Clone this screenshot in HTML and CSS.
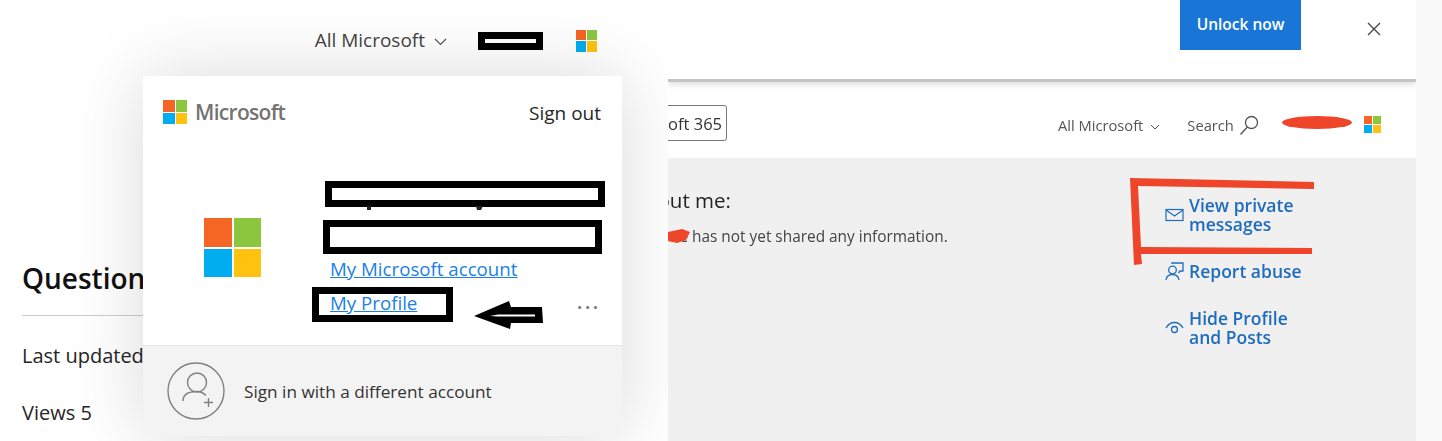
FILE: index.html
```html
<!DOCTYPE html>
<html lang="en">
<head>
  <meta charset="UTF-8">
  <meta name="viewport" content="width=device-width, initial-scale=1.0">
  <title>My Profile</title>
  <link rel="stylesheet" href="styles.css">
</head>
<body>
  <div class="shot">

    <!-- left capture -->
    <section class="left">
      <div class="topbar">
        <span class="topbar-link">All Microsoft</span>
        <svg class="chevron" width="13" height="8" viewBox="0 0 13 8"><path d="M1 1l5.500 5.500L12 1" fill="none" stroke="#555" stroke-width="1.2"/></svg>
        <span class="redacted"><i></i></span>
        <div class="ms-logo ms-logo-top"><b class="o"></b><b class="g"></b><b class="b"></b><b class="y"></b></div>
      </div>

      <div class="question">
        <h2>Question Info</h2>
        <p class="updated">Last updated on</p>
        <p class="views">Views 5</p>
      </div>

      <div class="flyout">
        <div class="flyout-head">
          <div class="brand">
            <div class="ms-logo ms-logo-brand"><b class="o"></b><b class="g"></b><b class="b"></b><b class="y"></b></div>
            <span>Microsoft</span>
          </div>
          <span class="signout">Sign out</span>
        </div>
        <div class="flyout-body">
          <div class="ms-logo ms-logo-avatar"><b class="o"></b><b class="g"></b><b class="b"></b><b class="y"></b></div>
          <div class="account-links">
            <a href="#">My Microsoft account</a>
            <a href="#">My Profile</a>
          </div>
          <span class="more">&middot;&middot;&middot;</span>
        </div>
        <div class="flyout-foot">
          <svg class="add-user" width="58" height="60" viewBox="0 0 58 60" fill="none" stroke="#808080" stroke-width="1.4">
            <circle cx="29" cy="30" r="28"/>
            <circle cx="30" cy="21.500" r="9.500"/>
            <path d="M16 40c0-6 5-9.500 14-9.500 3.500 0 6.500 1.500 9 4"/>
            <path d="M37 41.500h9M41.500 37v9"/>
          </svg>
          <span>Sign in with a different account</span>
        </div>
      </div>
    </section>

    <!-- right capture -->
    <section class="right">
      <div class="banner">
        <button class="unlock">Unlock now</button>
        <svg class="close" width="14" height="14" viewBox="0 0 14 14"><path d="M1 1l12 12M13 1L1 13" stroke="#444" stroke-width="1.3"/></svg>
      </div>
      <div class="nav">
        <span class="nav-button">Microsoft 365</span>
        <span class="nav-link">All Microsoft</span>
        <svg class="nav-chevron" width="10" height="6" viewBox="0 0 10 6"><path d="M1 1l4 4 4-4" fill="none" stroke="#555" stroke-width="1"/></svg>
        <span class="nav-link nav-search">Search</span>
        <svg class="search-icon" width="20" height="21" viewBox="0 0 20 21" fill="none" stroke="#555" stroke-width="1.300"><circle cx="12.500" cy="7.500" r="6"/><path d="M8.300 12L1.500 19.500"/></svg>
        <div class="ms-logo ms-logo-nav"><b class="o"></b><b class="g"></b><b class="b"></b><b class="y"></b></div>
      </div>
      <div class="profile">
        <div class="about">
          <h3>About me:</h3>
          <p>Name has not yet shared any information.</p>
        </div>
        <ul class="actions">
          <li>
            <svg width="19" height="14" viewBox="0 0 19 14" fill="none" stroke="#1f6cbd" stroke-width="1.200"><rect x="1" y="1.500" width="17" height="11"/><path d="M1 2l8.500 6L18 2"/></svg>
            <span>View private<br>messages</span>
          </li>
          <li>
            <svg width="19" height="19" viewBox="0 0 19 19" fill="none" stroke="#1f6cbd" stroke-width="1.300"><circle cx="7.500" cy="8" r="3.800"/><path d="M1 18c.5-3.500 3-5.500 6.500-5.500s6 2 6.500 5.500M7 2V1h11v8h-3l-1.500 2"/></svg>
            <span>Report abuse</span>
          </li>
          <li class="actions-hide">
            <svg width="19" height="14" viewBox="0 0 19 14" fill="none" stroke="#1f6cbd" stroke-width="1.300"><path d="M1 7c2-3.500 5-5.500 8.500-5.500S16 3.500 18 7"/><circle cx="9.500" cy="8.500" r="3"/></svg>
            <span>Hide Profile<br>and Posts</span>
          </li>
        </ul>
      </div>
    </section>

    <div class="strip"></div>

    <!-- marks drawn on top of the screenshot -->
    <svg class="marks" width="1442" height="441" viewBox="0 0 1442 441">
      <g fill="none" stroke="#000" stroke-width="7">
        <rect x="328.500" y="184.500" width="273" height="19"/>
        <rect x="326.500" y="223.500" width="272" height="27"/>
        <rect x="315.500" y="290.500" width="134" height="28"/>
      </g>
      <path d="M474 316l35-15 2 6h31l1 16h-32l-1 6z" fill="#000"/>
      <path d="M490 316l8-1.500h37v2h-37z" fill="#fff"/>
      <path d="M367 206h4v4h-4zM476 206h7l-2 4h-4z" fill="#222"/>
      <g fill="#ee452b">
        <ellipse cx="1317" cy="122.500" rx="35" ry="6.500"/>
        <path d="M668 232l14-3 8 3-4 8-9 3-9-2z"/>
        <path d="M1130 178l184 4v7l-176-3 3 61 171 1v6l-171 0 1 10-8 1z"/>
      </g>
    </svg>
  </div>
</body>
</html>
```

FILE: styles.css
```css
* {
  box-sizing: border-box;
}

body {
  margin: 0;
  background: #fff;
  font-family: "Open Sans", "Noto Sans", sans-serif;
  color: #262626;
}

.shot {
  position: relative;
  display: flex;
  width: 1442px;
  height: 441px;
  overflow: hidden;
  filter: blur(0.3px);
}

.marks {
  position: absolute;
  top: 0;
  left: 0;
}

/* ms logo */
.ms-logo {
  display: grid;
  grid-template-columns: 1fr 1fr;
  grid-template-rows: 1fr 1fr;
  gap: 1px;
  flex: none;
}

.ms-logo .o { background: #f56523; }
.ms-logo .g { background: #8cc63f; }
.ms-logo .b { background: #00adef; }
.ms-logo .y { background: #ffc20e; }

.ms-logo-top { width: 21px; height: 22px; }
.ms-logo-brand { width: 24px; height: 24px; }
.ms-logo-nav { width: 17px; height: 17px; margin: 6px 0 0 105px; }
.ms-logo-avatar { width: 57px; height: 59px; gap: 2px; margin: 92px 0 0 61px; }

/* left capture */
.left {
  position: relative;
  flex: none;
  width: 668px;
  overflow: hidden;
  background: #fff;
}

.topbar {
  display: flex;
  align-items: center;
  justify-content: flex-end;
  height: 81px;
  padding: 0 71px 0 0;
}

.topbar-link {
  margin-bottom: 2px;
  font-size: 19px;
  color: #444;
}

.chevron {
  margin: 3px 0 0 9px;
}

.redacted {
  display: flex;
  align-items: center;
  justify-content: center;
  width: 65px;
  height: 18px;
  margin: 0 33px 0 31px;
  background: #000;
}

.redacted i {
  width: 51px;
  height: 4px;
  background: #fff;
}

.question {
  padding: 179px 0 0 22px;
}

.question h2 {
  width: 121px;
  margin: 0;
  padding-bottom: 19px;
  border-bottom: 1px solid #ccc;
  font-size: 28px;
  font-weight: 600;
  line-height: 36px;
  color: #111;
  white-space: nowrap;
}

.question p {
  margin: 0;
  font-size: 20px;
  line-height: 24px;
  white-space: nowrap;
}

.question .updated {
  margin-top: 28px;
}

.question .views {
  margin-top: 33px;
}

.flyout {
  position: absolute;
  top: 76px;
  left: 143px;
  display: flex;
  flex-direction: column;
  width: 479px;
  height: 360px;
  background: #fff;
  box-shadow: 0 0 70px rgba(0, 0, 0, 0.15);
}

.flyout-head {
  display: flex;
  align-items: center;
  justify-content: space-between;
  padding: 22px 21px 0 20px;
}

.brand {
  display: flex;
  align-items: center;
  gap: 8px;
  font-size: 21px;
  font-weight: 600;
  letter-spacing: -0.7px;
  color: #737373;
}

.signout {
  margin-top: 1px;
  font-size: 19px;
}

.flyout-body {
  position: relative;
  display: flex;
  flex: 1;
}

.account-links {
  display: flex;
  flex-direction: column;
  gap: 9px;
  margin: 130px 0 0 69px;
}

.account-links a {
  font-size: 18.700px;
  line-height: 25px;
  color: #1a80e5;
}

.more {
  position: absolute;
  top: 169px;
  right: 22px;
  font-size: 24px;
  line-height: 24px;
  letter-spacing: 1.500px;
  color: #777;
}

.flyout-foot {
  display: flex;
  align-items: center;
  gap: 19px;
  height: 91px;
  padding: 0 0 0 24px;
  border-top: 1px solid #e6e6e6;
  background: #f3f3f3;
  font-size: 17.200px;
  color: #333;
}

/* right capture */
.right {
  display: flex;
  flex: none;
  flex-direction: column;
  width: 748px;
  overflow: hidden;
}

.banner {
  display: flex;
  align-items: flex-start;
  height: 82px;
  padding-left: 512px;
  border-bottom: 3px solid #c4c4c4;
  box-shadow: 0 3px 6px rgba(0, 0, 0, 0.12);
}

.unlock {
  width: 121px;
  height: 50px;
  padding: 0 0 2px;
  border: 0;
  background: #1976d7;
  font-family: inherit;
  font-size: 15.500px;
  font-weight: 600;
  color: #fff;
}

.close {
  margin: 22px 0 0 66px;
}

.nav {
  display: flex;
  align-items: center;
  height: 76px;
  padding-top: 2px;
}

.nav-button {
  flex: none;
  width: 120px;
  height: 36px;
  margin: 4px 331px 0 -61px;
  padding-right: 4px;
  border: 1px solid #777;
  border-radius: 3px;
  font-size: 16.500px;
  font-weight: 500;
  line-height: 36px;
  text-align: right;
  color: #333;
  white-space: nowrap;
}

.nav-link {
  margin-top: 8px;
  font-size: 14.700px;
  color: #555;
  white-space: nowrap;
}

.nav-chevron {
  margin: 12px 0 0 7px;
}

.nav-search {
  margin-left: 27px;
}

.search-icon {
  margin: 8px 0 0 5px;
}

.profile {
  display: flex;
  flex: 1;
  background: #f0f0f0;
}

.about {
  flex: none;
  width: 496px;
  padding-top: 27px;
}

.about h3 {
  margin: 0 0 0 -36px;
  font-size: 20.500px;
  font-weight: 500;
  line-height: 30px;
  color: #222;
}

.about p {
  margin: 12px 0 0 -23px;
  font-size: 15.400px;
  line-height: 20px;
  color: #444;
  white-space: nowrap;
}

.actions {
  margin: 0;
  padding: 38px 0 0 1px;
  list-style: none;
}

.actions li {
  display: flex;
  align-items: center;
  gap: 5px;
  margin-bottom: 23px;
  font-size: 17.500px;
  font-weight: 600;
  line-height: 19px;
  color: #1f6cbd;
}

.actions li:first-child {
  margin-bottom: 28px;
}

.actions-hide {
  margin-top: 28px;
}

.strip {
  flex: 1;
  background: #f9f9f9;
}
```
